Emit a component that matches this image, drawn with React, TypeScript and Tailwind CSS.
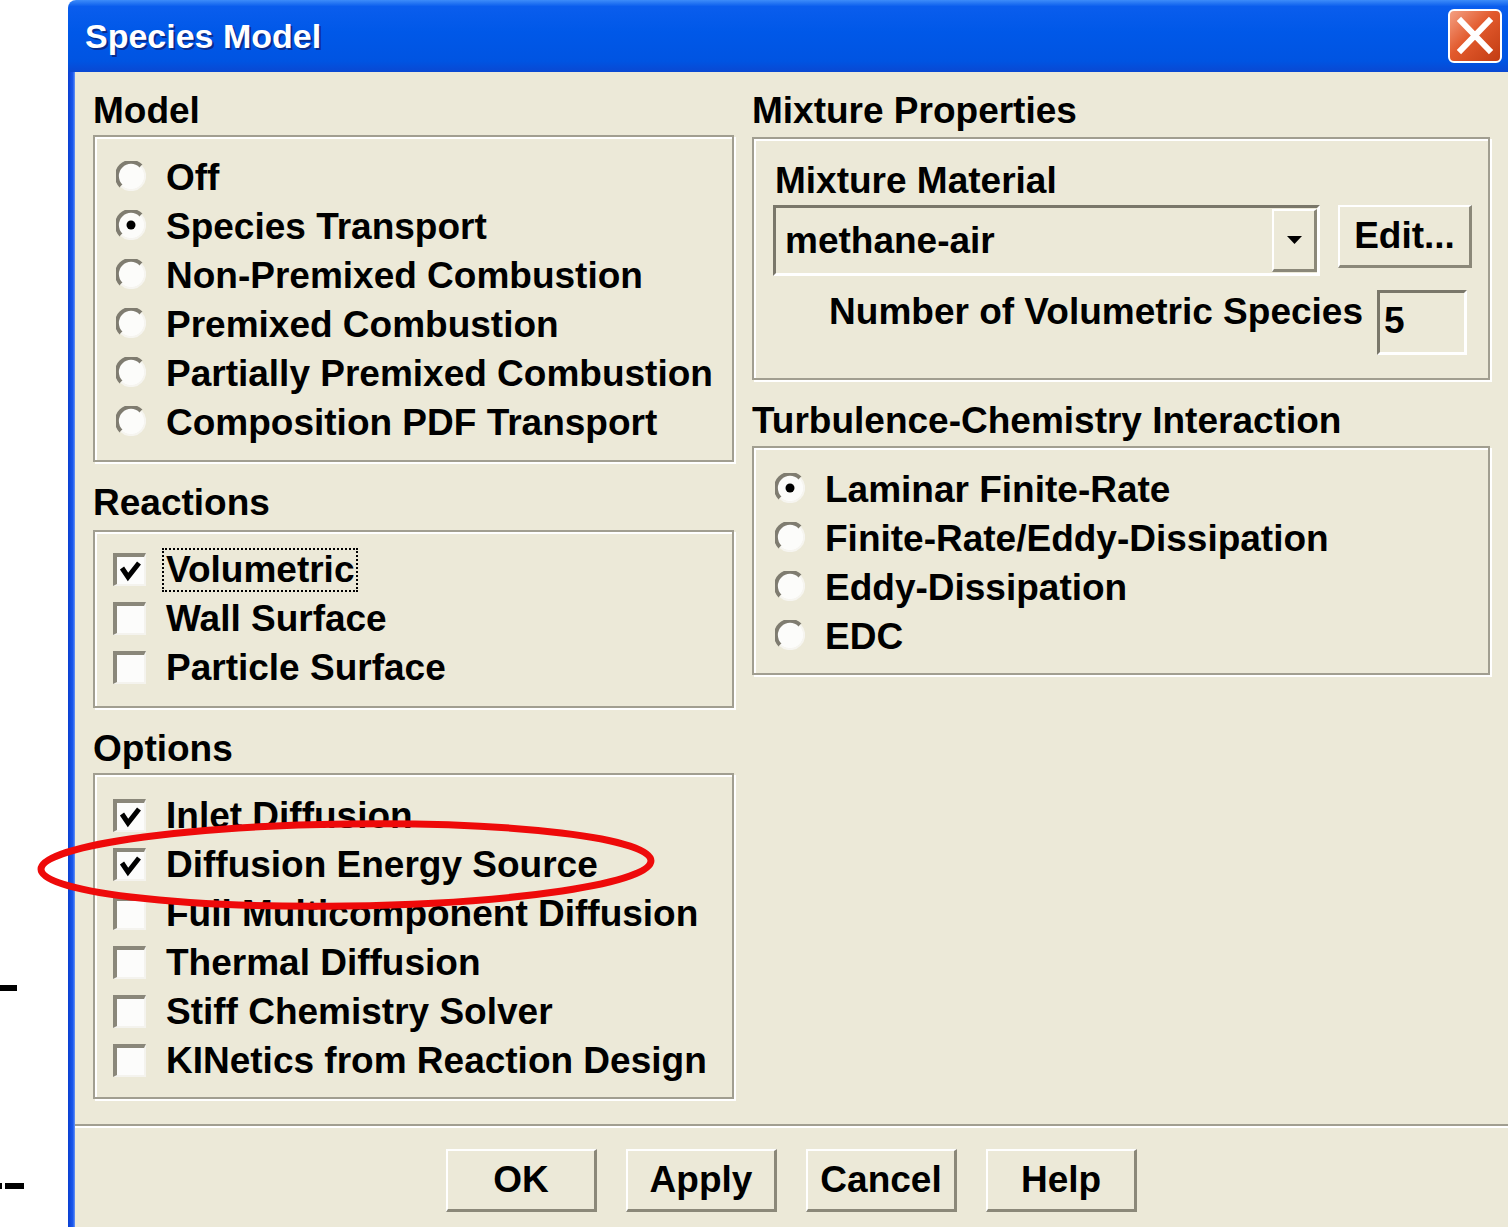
import React from 'react'

// etched group frame, Windows classic style
const frame = 'border-2 border-[#a19e90] shadow-[inset_2px_2px_0_#ffffff,2px_2px_0_#ffffff]'
const raised =
  'border-t-2 border-l-2 border-t-white border-l-white border-r-[3px] border-b-[3px] border-r-[#8b8879] border-b-[#8b8879] bg-[#ece9d8]'
const sunken =
  'border-t-[3px] border-l-[3px] border-t-[#7a776a] border-l-[#7a776a] border-r-[3px] border-b-[3px] border-r-white border-b-white bg-[#ece9d8]'
const txt = 'whitespace-nowrap text-[37px] font-bold leading-[40px]'

function Radio({ on = false }: { on?: boolean }) {
  return (
    <svg width="30" height="30" viewBox="0 0 30 30" className="-ml-[1px] -mt-[3px] shrink-0">
      <circle cx="15" cy="15" r="13.5" fill="#fcfcfa" />
      <path d="M5 25 A14 14 0 0 1 25 5" fill="none" stroke="#7f7c70" strokeWidth="4" />
      <path d="M25 5 A14 14 0 0 1 5 25" fill="none" stroke="#f6f5f0" strokeWidth="2" />
      {on && <circle cx="15" cy="15" r="4.5" fill="#000" />}
    </svg>
  )
}

function Check({ on = false }: { on?: boolean }) {
  return (
    <span className="flex h-[33px] w-[33px] shrink-0 border-t-4 border-l-4 border-t-[#8a877a] border-l-[#8a877a] border-r-2 border-b-2 border-r-[#f4f3ee] border-b-[#f4f3ee] bg-[#fcfcfb]">
      {on && (
        <svg width="27" height="27" viewBox="0 0 27 27">
          <polyline points="5,11 11,20 22,6" fill="none" stroke="#000" strokeWidth="5" />
        </svg>
      )}
    </span>
  )
}

function RadioRow({ label, on }: { label: string; on?: boolean }) {
  return (
    <div className="flex h-[49px] items-center gap-[20px]">
      <Radio on={on} />
      <span className={txt}>{label}</span>
    </div>
  )
}

function CheckRow({ label, on, focus }: { label: string; on?: boolean; focus?: boolean }) {
  return (
    <div className="flex h-[49px] items-center gap-5">
      <Check on={on} />
      {focus ? (
        <span className={`${txt} -ml-[4px] border-2 border-dotted border-black px-[2px]`}>{label}</span>
      ) : (
        <span className={txt}>{label}</span>
      )}
    </div>
  )
}

export default function App() {
  return (
    <div className="relative flex h-[1227px] w-[1508px] overflow-hidden bg-white font-['Liberation_Sans',Arial,sans-serif] text-black">
      {/* page margin with stray marks */}
      <div className="flex w-[68px] shrink-0 flex-col">
        <div className="mt-[985px] h-[6px] w-[17px] bg-black" />
        <div className="mt-[192px] flex">
          <div className="h-[6px] w-[2px] bg-black" />
          <div className="ml-[3px] h-[6px] w-[19px] bg-black" />
        </div>
      </div>

      <div className="flex flex-1 flex-col">
        {/* title bar */}
        <div className="flex h-[72px] shrink-0 items-center rounded-tl-[8px] bg-[linear-gradient(180deg,#3d8cf9_0%,#0a5ded_9%,#0058e8_45%,#0054e2_85%,#0a48d2_100%)] pl-[17px]">
          <span className="text-[34px] font-bold text-white [text-shadow:2px_2px_0_#0a2c8c]">Species Model</span>
          <div className="ml-auto mr-[6px] flex h-[54px] w-[54px] items-center justify-center rounded-[6px] border-2 border-white bg-[linear-gradient(135deg,#f4a083,#e25a2d_45%,#c23c12)]">
            <svg width="50" height="50" viewBox="0 0 50 50">
              <path d="M11 10 L39 39 M39 10 L11 39" stroke="#fff" strokeWidth="6" strokeLinecap="square" />
            </svg>
          </div>
        </div>

        <div className="flex flex-1">
          <div className="w-[7px] shrink-0 bg-[linear-gradient(90deg,#0a3fd0,#1a58ee_70%,#6b97f5)]" />

          <div className="flex flex-1 flex-col bg-[#ece9d8]">
            <div className="flex gap-[18px] px-[18px] pt-[19px]">
              {/* left column */}
              <div className="flex w-[641px] flex-col">
                <div className={`${txt} mb-1`}>Model</div>
                <div className={`${frame} pl-[22px] pt-4 pb-[13px]`}>
                  <RadioRow label="Off" />
                  <RadioRow label="Species Transport" on />
                  <RadioRow label="Non-Premixed Combustion" />
                  <RadioRow label="Premixed Combustion" />
                  <RadioRow label="Partially Premixed Combustion" />
                  <RadioRow label="Composition PDF Transport" />
                </div>

                <div className={`${txt} mt-[21px] mb-[7px]`}>Reactions</div>
                <div className={`${frame} pl-[18px] pt-[13px] pb-[14px]`}>
                  <CheckRow label="Volumetric" on focus />
                  <CheckRow label="Wall Surface" />
                  <CheckRow label="Particle Surface" />
                </div>

                <div className={`${txt} mt-[21px] mb-1`}>Options</div>
                <div className={`${frame} pl-[18px] pt-4 pb-3`}>
                  <CheckRow label="Inlet Diffusion" on />
                  <CheckRow label="Diffusion Energy Source" on />
                  <CheckRow label="Full Multicomponent Diffusion" />
                  <CheckRow label="Thermal Diffusion" />
                  <CheckRow label="Stiff Chemistry Solver" />
                  <CheckRow label="KINetics from Reaction Design" />
                </div>
              </div>

              {/* right column */}
              <div className="flex w-[738px] flex-col">
                <div className={`${txt} mb-[6px]`}>Mixture Properties</div>
                <div className={`${frame} pt-[22px] pb-[23px]`}>
                  <div className={`${txt} pl-[21px]`}>Mixture Material</div>
                  <div className="mt-1 flex items-start gap-[18px] pl-[19px]">
                    <div className={`${sunken} flex h-[71px] w-[547px] items-stretch`}>
                      <span className={`${txt} flex flex-1 items-center pl-[9px]`}>methane-air</span>
                      <div className={`${raised} my-[1px] flex w-[45px] items-center justify-center`}>
                        <svg width="15" height="9" viewBox="0 0 15 9">
                          <polygon points="0,0 15,0 7.5,8" fill="#000" />
                        </svg>
                      </div>
                    </div>
                    <div className={`${raised} flex h-[63px] w-[134px] items-center justify-center`}>
                      <span className={txt}>Edit...</span>
                    </div>
                  </div>
                  <div className="mt-[14px] flex items-start justify-end gap-[14px] pr-[21px]">
                    <span className={`${txt} mt-[2px]`}>Number of Volumetric Species</span>
                    <div className={`${sunken} flex h-[65px] w-[90px] items-center pb-1 pl-[4px]`}>
                      <span className={txt}>5</span>
                    </div>
                  </div>
                </div>

                <div className={`${txt} mt-[21px] mb-[5px]`}>Turbulence-Chemistry Interaction</div>
                <div className={`${frame} pl-[22px] pt-[17px] pb-3`}>
                  <RadioRow label="Laminar Finite-Rate" on />
                  <RadioRow label="Finite-Rate/Eddy-Dissipation" />
                  <RadioRow label="Eddy-Dissipation" />
                  <RadioRow label="EDC" />
                </div>
              </div>
            </div>

            {/* separator */}
            <div className="mt-[25px] h-[2px] bg-[#a19e90]" />
            <div className="h-[2px] bg-white" />

            <div className="mt-[21px] flex justify-center gap-[29px]">
              {['OK', 'Apply', 'Cancel', 'Help'].map((b) => (
                <div key={b} className={`${raised} flex h-[63px] w-[151px] items-center justify-center`}>
                  <span className={txt}>{b}</span>
                </div>
              ))}
            </div>
          </div>
        </div>
      </div>

      {/* red annotation ring */}
      <svg className="pointer-events-none absolute left-0 top-0" width="1508" height="1227" viewBox="0 0 1508 1227">
        <ellipse cx="346" cy="865" rx="305" ry="41" fill="none" stroke="#ee0a0a" strokeWidth="7" transform="rotate(-0.8 346 865)" />
      </svg>
    </div>
  )
}
